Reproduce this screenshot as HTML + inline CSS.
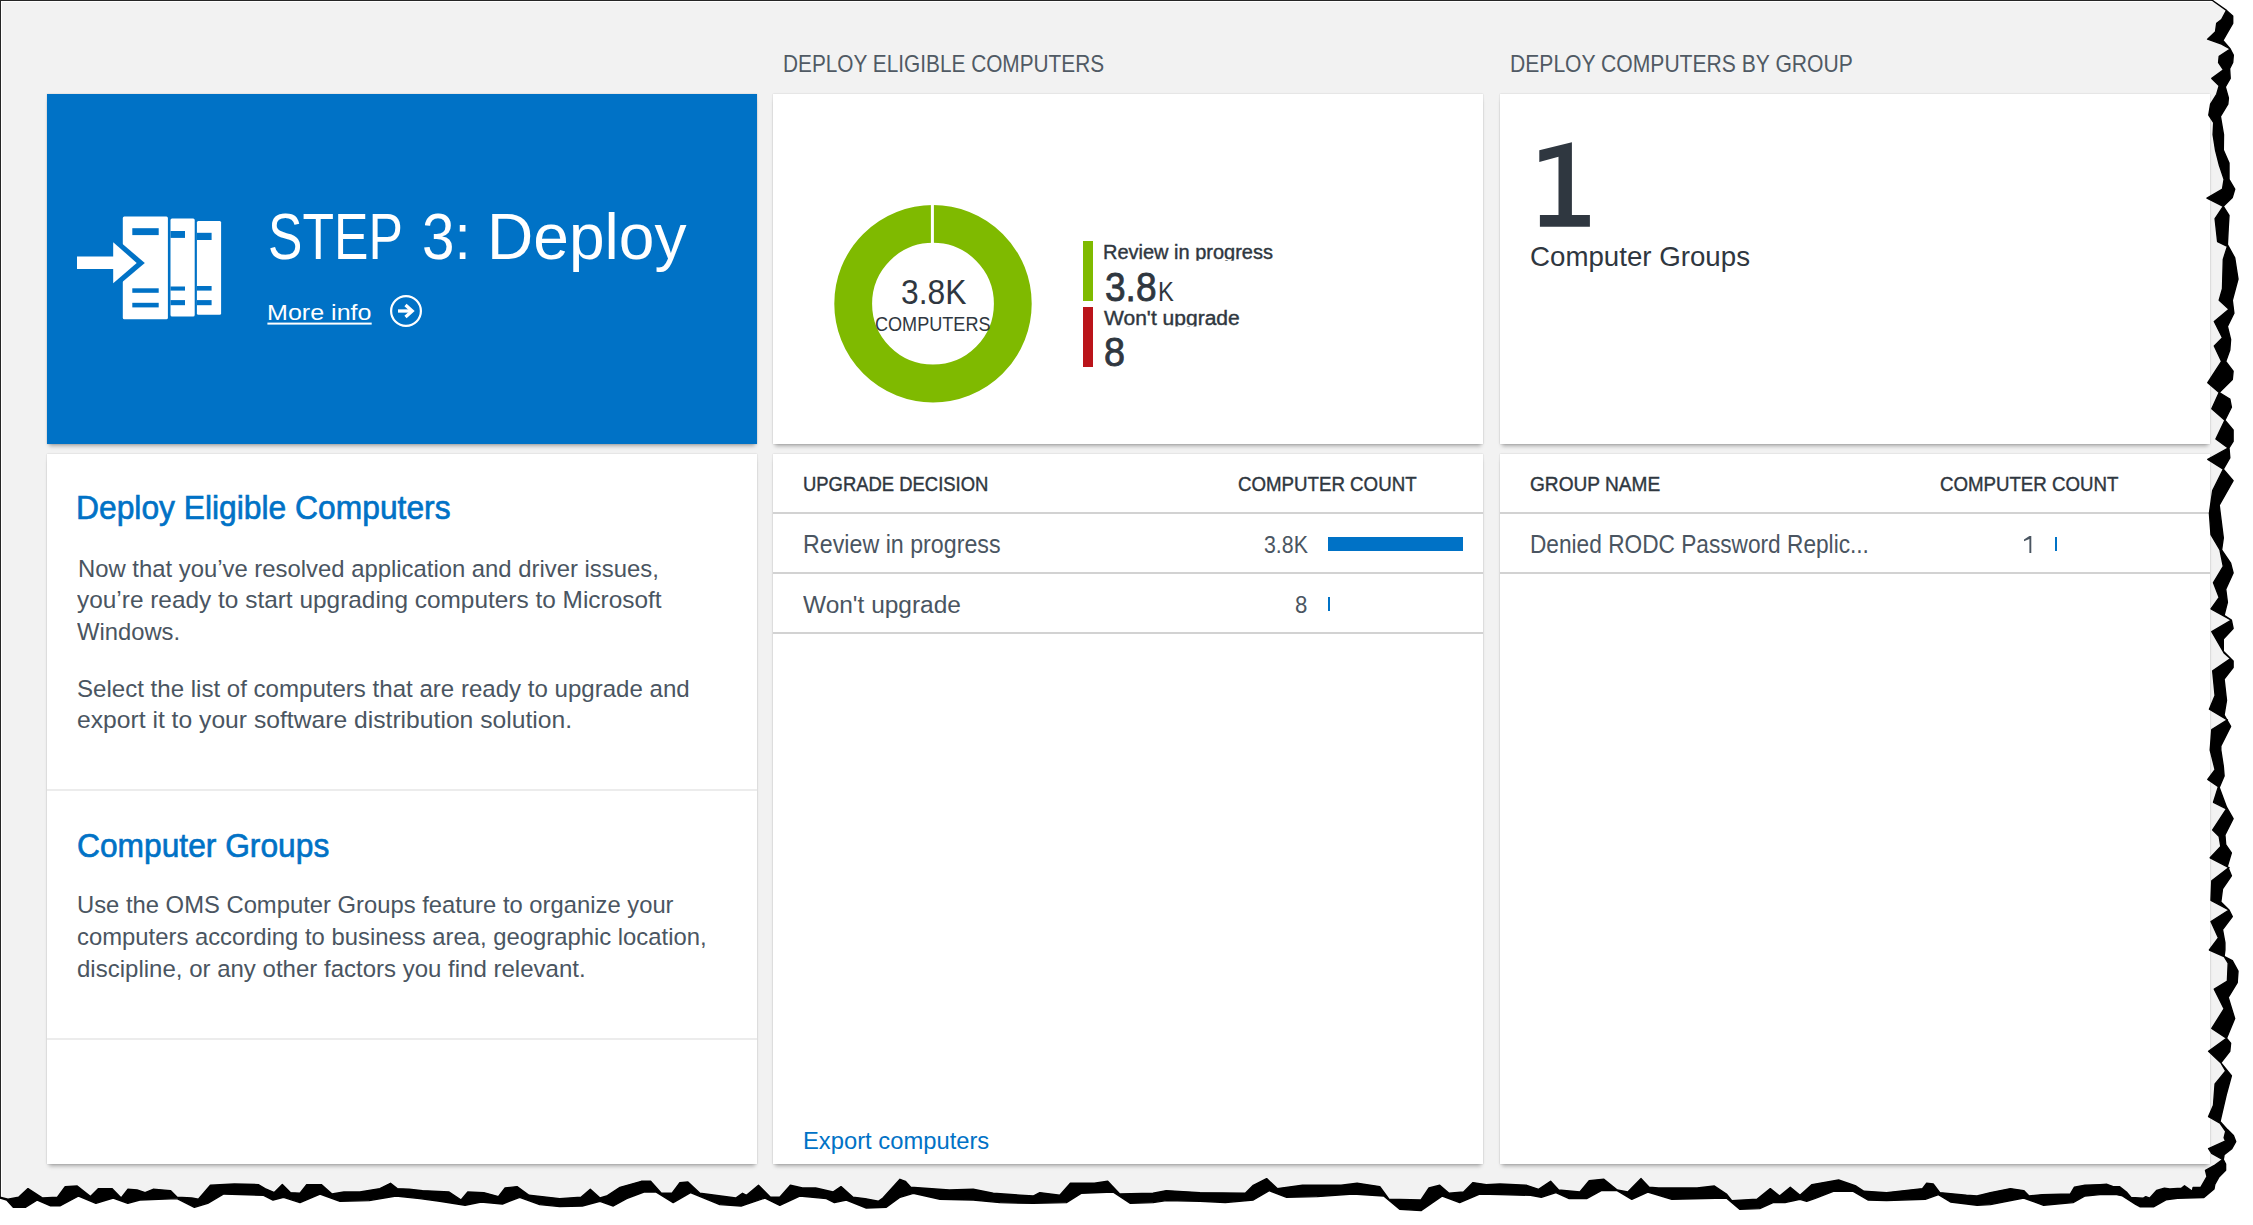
<!DOCTYPE html>
<html><head><meta charset="utf-8">
<style>
html,body{margin:0;padding:0;}
body{width:2253px;height:1225px;overflow:hidden;position:relative;background:#f2f2f2;font-family:"Liberation Sans",sans-serif;}
.t{position:absolute;white-space:nowrap;line-height:1;transform-origin:0 0;}
.card{position:absolute;background:#fff;box-shadow:0 4px 4px -2px rgba(0,0,0,0.3),0 0 1.5px rgba(0,0,0,0.18);}
.div{position:absolute;height:2px;background:#d2d2d2;}
.bar{position:absolute;background:#0072c6;}
#frame{position:absolute;left:0;top:0;width:2253px;height:1225px;box-sizing:border-box;border-top:1px solid #262626;border-left:1px solid #262626;}
#frame2{position:absolute;left:1px;top:1px;width:2252px;height:1224px;box-sizing:border-box;border-top:1px solid #fff;border-left:1px solid #fff;}
</style></head><body>
<div id="frame"></div><div id="frame2"></div>
<!-- cards -->
<div class="card" style="left:47px;top:94px;width:710px;height:350px;background:#0072c6;"></div>
<div class="card" style="left:773px;top:94px;width:710px;height:350px;"></div>
<div class="card" style="left:1500px;top:94px;width:710px;height:350px;"></div>
<div class="card" style="left:47px;top:454px;width:710px;height:710px;"></div>
<div class="card" style="left:773px;top:454px;width:710px;height:710px;"></div>
<div class="card" style="left:1500px;top:454px;width:710px;height:710px;"></div>
<!-- dividers -->
<div class="div" style="left:47px;top:789px;width:710px;height:2px;background:#ececec;"></div>
<div class="div" style="left:47px;top:1038px;width:710px;height:2px;background:#ececec;"></div>
<div class="div" style="left:773px;top:512px;width:710px;"></div>
<div class="div" style="left:773px;top:572px;width:710px;"></div>
<div class="div" style="left:773px;top:632px;width:710px;"></div>
<div class="div" style="left:1500px;top:512px;width:710px;"></div>
<div class="div" style="left:1500px;top:572px;width:710px;"></div>
<!-- bars -->
<div class="bar" style="left:1328px;top:537px;width:135px;height:14px;"></div>
<div class="bar" style="left:1328px;top:597px;width:2px;height:14px;"></div>
<div class="bar" style="left:2054.8px;top:537px;width:2.4px;height:14px;"></div>
<!-- legend bars -->
<div style="position:absolute;left:1083px;top:241px;width:10px;height:60px;background:#7fba00;"></div>
<div style="position:absolute;left:1083px;top:307px;width:10px;height:60px;background:#ba141a;"></div>
<!-- donut -->
<svg style="position:absolute;left:0;top:0" width="2253" height="1225" viewBox="0 0 2253 1225">
  <circle cx="933" cy="303.7" r="79.8" fill="none" stroke="#7fba00" stroke-width="37.8"/>
  <rect x="930.9" y="200" width="3" height="45" fill="#fff"/>
  <!-- server icon -->
  <g fill="#fff">
    <rect x="122.8" y="216.4" width="45.1" height="102.8" rx="1.5"/>
    <rect x="170.5" y="218.6" width="24.2" height="97.9" rx="1.5"/>
    <rect x="196.9" y="221" width="24.2" height="93.7" rx="1.5"/>
  </g>
  <g fill="#0072c6">
    <rect x="132.3" y="228.2" width="26.4" height="6.9"/>
    <rect x="132.3" y="288.3" width="26.4" height="4.5"/>
    <rect x="132.3" y="302.8" width="26.4" height="4.6"/>
    <rect x="170.5" y="231" width="14.5" height="6.9"/>
    <rect x="170.5" y="286.5" width="14.5" height="4.1"/>
    <rect x="170.5" y="300.1" width="14.5" height="5.1"/>
    <rect x="196.9" y="232.8" width="14.7" height="7.2"/>
    <rect x="196.9" y="286" width="14.7" height="4.6"/>
    <rect x="196.9" y="300.1" width="14.7" height="5.1"/>
    <polygon points="113.2,236.1 144.8,262.9 113.2,289.7"/>
  </g>
  <g fill="#fff">
    <rect x="77" y="256.5" width="37" height="12.5"/>
    <polygon points="113.2,242.3 136.7,262.9 113.2,283.2"/>
  </g>
  <!-- more info circle -->
  <circle cx="406" cy="311" r="14.9" fill="none" stroke="#fff" stroke-width="2.2"/>
  <g stroke="#fff" stroke-width="3.3" fill="none" stroke-linecap="butt">
    <line x1="398" y1="311" x2="412" y2="311"/>
    <polyline points="405.5,305 412.2,311 405.5,317" stroke-linejoin="miter"/>
  </g>
  <!-- underline -->
  <rect x="267.4" y="322.6" width="104.3" height="2" fill="#fff"/>
  <!-- small 1 -->
  <polygon fill="#4a5561" points="2029.4,536.1 2031.3,536.1 2031.3,552.9 2029.4,552.9 2029.4,538.9 2024,541.2 2024,539.5"/>
  <!-- big 1 -->
  <polygon fill="#2f3740" points="1571.9,142.2 1571.9,215.1 1589.9,215.1 1589.9,226.8 1539.9,226.8 1539.9,215.1 1558.5,215.1 1558.5,156.8 1539.3,162.1 1539.3,150.3"/>
</svg>
<div class="t" id="h1" style="left:783.44px;top:52.00px;font-size:24.13px;color:#505a64;transform:scaleX(0.8626);">DEPLOY ELIGIBLE COMPUTERS</div>
<div class="t" id="h2" style="left:1509.93px;top:52.00px;font-size:24.13px;color:#505a64;transform:scaleX(0.8746);">DEPLOY COMPUTERS BY GROUP</div>
<div class="t" id="step1" style="left:268.22px;top:204.00px;font-size:65.41px;color:#ffffff;transform:scaleX(0.7894);">STEP</div>
<div class="t" id="step2" style="left:421.91px;top:204.00px;font-size:65.41px;color:#ffffff;transform:scaleX(0.8929);">3:</div>
<div class="t" id="step3" style="left:486.90px;top:204.00px;font-size:65.41px;color:#ffffff;transform:scaleX(0.9799);">Deploy</div>
<div class="t" id="more" style="left:267.09px;top:302.00px;font-size:22.53px;color:#ffffff;transform:scaleX(1.1134);">More info</div>
<div class="t" id="d38" style="left:901.09px;top:274.00px;font-size:35.03px;color:#2f3740;transform:scaleX(0.9084);">3.8K</div>
<div class="t" id="dcomp" style="left:875.20px;top:314.00px;font-size:20.20px;color:#2f3740;transform:scaleX(0.8956);">COMPUTERS</div>
<div class="t" id="lrev" style="left:1103.40px;top:243.00px;font-size:19.91px;color:#2f3740;transform:scaleX(1.0035);-webkit-text-stroke:0.40px #2f3740;clip-path:inset(-5px -5px 2.21px -5px);">Review in progress</div>
<div class="t" id="l38" style="left:1104.57px;top:268.00px;font-size:39.83px;color:#2f3740;transform:scaleX(0.9302);-webkit-text-stroke:0.80px #2f3740;">3.8</div>
<div class="t" id="lK" style="left:1157.92px;top:277.00px;font-size:28.20px;color:#2f3740;transform:scaleX(0.8412);">K</div>
<div class="t" id="lwon" style="left:1103.90px;top:309.00px;font-size:19.91px;color:#2f3740;transform:scaleX(1.0567);-webkit-text-stroke:0.40px #2f3740;clip-path:inset(-5px -5px 2.41px -5px);">Won't upgrade</div>
<div class="t" id="l8" style="left:1103.76px;top:333.00px;font-size:39.97px;color:#2f3740;transform:scaleX(0.9450);-webkit-text-stroke:0.80px #2f3740;">8</div>
<div class="t" id="cg" style="left:1530.13px;top:242.00px;font-size:28.49px;color:#2f3740;transform:scaleX(0.9718);">Computer Groups</div>
<div class="t" id="th1" style="left:803.01px;top:474.00px;font-size:20.64px;color:#2f3740;transform:scaleX(0.8933);-webkit-text-stroke:0.41px #2f3740;">UPGRADE DECISION</div>
<div class="t" id="th2" style="left:1237.99px;top:474.00px;font-size:20.64px;color:#2f3740;transform:scaleX(0.9060);-webkit-text-stroke:0.41px #2f3740;">COMPUTER COUNT</div>
<div class="t" id="r1" style="left:802.95px;top:532.00px;font-size:25.15px;color:#4a5561;transform:scaleX(0.9242);">Review in progress</div>
<div class="t" id="r1v" style="left:1264.20px;top:533.00px;font-size:24.13px;color:#4a5561;transform:scaleX(0.8842);">3.8K</div>
<div class="t" id="r2" style="left:803.40px;top:593.00px;font-size:24.56px;color:#4a5561;transform:scaleX(0.9969);">Won't upgrade</div>
<div class="t" id="r2v" style="left:1295.18px;top:593.00px;font-size:24.27px;color:#4a5561;transform:scaleX(0.9167);">8</div>
<div class="t" id="export" style="left:802.95px;top:1129.00px;font-size:24.42px;color:#0072c6;transform:scaleX(0.9738);">Export computers</div>
<div class="t" id="th3" style="left:1529.97px;top:474.00px;font-size:20.64px;color:#2f3740;transform:scaleX(0.9260);-webkit-text-stroke:0.41px #2f3740;">GROUP NAME</div>
<div class="t" id="th4" style="left:1940.10px;top:474.00px;font-size:20.64px;color:#2f3740;transform:scaleX(0.9049);-webkit-text-stroke:0.41px #2f3740;">COMPUTER COUNT</div>
<div class="t" id="g1" style="left:1529.71px;top:532.00px;font-size:25.29px;color:#4a5561;transform:scaleX(0.8967);">Denied RODC Password Replic...</div>
<div class="t" id="dec" style="left:75.67px;top:491.00px;font-size:32.99px;color:#0072c6;transform:scaleX(0.9638);-webkit-text-stroke:0.66px #0072c6;">Deploy Eligible Computers</div>
<div class="t" id="p1" style="left:77.52px;top:557.00px;font-size:24.27px;color:#4a5561;transform:scaleX(0.9831);">Now that you’ve resolved application and driver issues,</div>
<div class="t" id="p2" style="left:76.90px;top:588.00px;font-size:24.27px;color:#4a5561;transform:scaleX(1.0056);">you’re ready to start upgrading computers to Microsoft</div>
<div class="t" id="p3" style="left:77.30px;top:620.00px;font-size:24.27px;color:#4a5561;transform:scaleX(0.9803);">Windows.</div>
<div class="t" id="p4" style="left:76.61px;top:677.00px;font-size:24.27px;color:#4a5561;transform:scaleX(0.9917);">Select the list of computers that are ready to upgrade and</div>
<div class="t" id="p5" style="left:76.58px;top:708.00px;font-size:24.27px;color:#4a5561;transform:scaleX(1.0168);">export it to your software distribution solution.</div>
<div class="t" id="cgh" style="left:76.67px;top:828.00px;font-size:34.01px;color:#0072c6;transform:scaleX(0.9335);-webkit-text-stroke:0.68px #0072c6;">Computer Groups</div>
<div class="t" id="q1" style="left:77.22px;top:893.00px;font-size:24.27px;color:#4a5561;transform:scaleX(0.9807);">Use the OMS Computer Groups feature to organize your</div>
<div class="t" id="q2" style="left:76.62px;top:925.00px;font-size:24.27px;color:#4a5561;transform:scaleX(0.9826);">computers according to business area, geographic location,</div>
<div class="t" id="q3" style="left:76.61px;top:957.00px;font-size:24.27px;color:#4a5561;transform:scaleX(0.9897);">discipline, or any other factors you find relevant.</div>
<svg style="position:absolute;left:0;top:0" width="2253" height="1225" viewBox="0 0 2253 1225">
<polygon fill="#fff" points="2211.8,0.0 2226.5,10.4 2232.7,15.9 2232.7,23.3 2222.9,40.4 2230.2,49.0 2233.3,55.1 2232.7,62.5 2229.6,68.6 2230.2,78.4 2225.3,87.0 2228.4,98.0 2227.8,104.1 2220.4,116.4 2223.5,134.7 2223.3,150.0 2229.0,163.0 2229.0,179.4 2234.7,189.2 2232.3,197.4 2223.3,206.3 2229.0,215.3 2228.2,228.4 2227.4,244.7 2234.7,257.8 2238.0,279.0 2232.3,300.3 2233.9,313.3 2227.4,326.4 2230.6,339.4 2229.8,350.0 2225.7,361.4 2233.1,371.2 2232.3,379.4 2219.2,392.5 2229.8,399.0 2231.4,407.2 2224.9,420.2 2233.1,430.0 2233.1,441.5 2229.0,448.0 2229.8,457.8 2223.3,469.2 2233.1,480.7 2219.2,505.2 2223.3,537.8 2221.6,550.0 2230.6,563.1 2233.1,572.9 2225.7,589.2 2227.4,602.3 2224.1,615.3 2231.4,620.2 2233.1,628.4 2223.3,639.0 2223.3,651.3 2233.1,661.1 2233.1,667.6 2224.1,679.0 2226.5,700.3 2224.1,715.0 2230.6,726.4 2220.8,746.0 2220.8,750.0 2223.3,766.3 2224.1,776.1 2219.2,787.6 2226.5,807.2 2233.1,818.6 2224.9,834.9 2225.7,844.7 2231.4,852.9 2227.4,866.0 2231.4,875.8 2222.5,888.8 2220.8,901.9 2229.0,910.0 2232.3,916.6 2222.5,929.6 2224.9,942.7 2224.9,950.0 2224.1,956.5 2232.3,960.6 2238.0,971.2 2237.2,982.7 2228.2,997.4 2234.7,1018.6 2226.5,1038.2 2230.6,1043.1 2229.8,1051.3 2220.8,1062.7 2231.4,1075.8 2226.5,1093.7 2220.0,1121.5 2227.4,1129.6 2233.4,1135.4 2235.7,1141.6 2231.8,1148.6 2224.1,1154.8 2223.3,1159.5 2225.6,1164.1 2225.6,1170.3 2218.7,1177.3 2214.8,1184.3 2214.0,1188.9 2203.9,1197.5 2177.5,1198.2 2165.9,1199.8 2156.6,1205.2 2153.5,1206.8 2140.3,1206.8 2135.7,1204.4 2122.5,1195.9 2115.5,1194.4 2100.0,1194.6 2085.0,1196.0 2073.0,1202.6 2043.7,1205.3 2023.7,1198.0 1990.4,1204.6 1977.1,1205.3 1950.5,1202.0 1938.5,1194.6 1925.2,1199.3 1886.6,1200.6 1867.9,1200.0 1853.3,1191.3 1833.3,1191.3 1814.6,1198.6 1806.7,1201.3 1800.0,1199.3 1785.0,1202.6 1773.0,1202.6 1759.7,1208.6 1739.7,1209.3 1726.4,1198.0 1671.8,1199.3 1647.8,1192.0 1631.8,1199.3 1617.2,1190.6 1601.2,1190.6 1586.6,1198.6 1569.2,1198.6 1555.9,1192.6 1541.3,1197.3 1530.6,1195.3 1500.0,1194.6 1479.6,1194.0 1459.7,1202.6 1442.3,1196.0 1421.0,1210.6 1399.7,1209.3 1383.8,1196.0 1353.1,1194.0 1317.2,1196.6 1286.6,1197.3 1269.2,1190.6 1253.3,1200.0 1225.3,1202.6 1200.0,1201.3 1166.3,1200.6 1153.0,1202.6 1130.4,1203.3 1113.0,1192.0 1081.1,1193.3 1066.4,1202.6 1033.2,1203.3 999.9,1202.6 973.2,1200.0 940.0,1199.3 913.3,1193.3 900.0,1197.3 886.3,1207.3 866.3,1208.0 846.3,1200.0 834.4,1202.6 826.4,1198.6 799.7,1196.0 779.8,1205.3 765.1,1198.0 741.1,1206.0 719.8,1204.6 690.5,1192.6 673.2,1202.6 655.9,1192.0 643.9,1192.0 626.6,1198.6 613.3,1206.0 600.0,1201.3 582.3,1206.0 559.7,1206.6 539.7,1204.6 519.7,1197.3 502.4,1204.0 481.1,1202.0 465.1,1205.3 439.8,1201.3 419.8,1198.6 395.9,1196.0 369.2,1200.6 340.0,1201.3 320.0,1194.0 300.0,1202.6 283.6,1197.3 273.0,1200.0 263.6,1195.3 223.7,1194.0 207.7,1203.3 194.4,1207.3 177.1,1198.6 139.8,1200.0 127.8,1203.3 113.2,1198.0 95.9,1203.3 78.6,1196.0 59.9,1205.9 50.6,1205.9 37.3,1200.0 25.3,1207.3 13.3,1207.3 6.7,1200.0 0.0,1198.0 0.0,1225.0 2253.0,1225.0 2253.0,0.0"/>
<polygon fill="#000" stroke="#000" stroke-width="1.4" stroke-linejoin="round" points="2211.8,0.0 2226.5,10.4 2221.6,19.6 2216.7,23.3 2215.5,31.8 2207.6,39.2 2221.6,44.1 2230.2,49.0 2219.2,56.3 2218.6,62.5 2223.5,69.8 2211.8,78.4 2219.2,85.7 2216.7,94.3 2210.6,104.1 2208.8,115.1 2213.7,122.5 2213.1,134.7 2215.5,150.0 2219.2,164.7 2224.1,179.4 2222.5,189.2 2207.0,198.2 2223.3,206.3 2215.1,218.6 2217.6,241.5 2227.4,246.4 2223.3,259.4 2222.5,288.8 2219.2,300.3 2229.0,309.2 2214.3,321.5 2222.5,337.8 2214.3,346.0 2221.6,361.4 2207.8,382.7 2219.2,392.5 2211.8,408.8 2224.9,420.2 2215.9,439.0 2228.2,448.0 2207.8,459.4 2223.3,469.2 2212.7,490.5 2209.4,513.3 2211.0,534.6 2220.0,550.0 2223.3,566.3 2213.5,582.7 2219.2,597.4 2211.0,608.8 2231.4,620.2 2211.8,631.7 2224.1,652.9 2230.6,658.6 2212.7,670.9 2215.1,695.4 2209.4,709.2 2227.4,719.9 2211.8,729.6 2210.2,750.0 2215.1,769.6 2207.8,779.4 2218.4,786.7 2213.5,802.3 2226.5,808.8 2212.7,830.0 2219.2,836.6 2220.8,846.4 2210.2,857.8 2229.0,867.6 2211.8,880.7 2211.0,900.3 2229.0,910.0 2211.0,921.5 2218.4,937.8 2209.4,950.0 2224.1,956.5 2228.2,963.1 2227.4,981.0 2214.3,989.2 2224.1,1008.8 2211.8,1028.4 2226.5,1038.2 2208.6,1051.3 2220.8,1062.7 2225.7,1070.9 2215.1,1083.9 2213.5,1105.2 2208.6,1116.6 2220.0,1123.1 2225.7,1131.3 2224.1,1137.8 2225.6,1140.9 2208.6,1148.6 2211.7,1153.3 2222.5,1159.5 2214.0,1165.7 2205.5,1170.3 2207.0,1176.5 2200.8,1187.4 2193.1,1187.4 2192.3,1191.3 2184.5,1185.8 2181.4,1188.2 2169.8,1188.9 2164.4,1188.2 2156.6,1190.5 2149.6,1198.2 2145.8,1196.7 2143.4,1198.2 2131.0,1197.5 2126.4,1192.0 2119.4,1186.6 2113.2,1186.6 2107.0,1184.3 2100.0,1184.6 2085.0,1185.3 2074.3,1187.3 2070.3,1194.0 2042.3,1194.6 2029.0,1196.0 2023.7,1190.6 2010.4,1188.6 1990.4,1192.6 1977.1,1196.0 1966.4,1195.3 1939.8,1192.6 1933.2,1184.0 1926.5,1183.3 1922.5,1188.6 1886.6,1192.6 1863.9,1191.3 1855.9,1186.0 1838.6,1180.0 1812.0,1184.6 1800.0,1195.3 1790.3,1187.3 1779.6,1196.0 1770.3,1188.6 1757.0,1199.3 1731.7,1200.6 1726.4,1194.0 1714.4,1186.0 1697.1,1188.0 1658.5,1188.0 1649.1,1187.3 1641.1,1178.6 1627.8,1192.0 1617.2,1190.0 1603.9,1179.3 1589.2,1180.6 1579.9,1192.0 1558.6,1190.0 1550.6,1181.3 1538.6,1189.3 1526.6,1185.3 1500.0,1184.0 1486.3,1184.6 1473.0,1182.6 1463.6,1192.0 1449.0,1193.3 1439.7,1185.3 1429.0,1188.0 1421.0,1200.0 1389.1,1199.3 1379.8,1186.6 1357.1,1183.3 1341.1,1185.3 1302.5,1185.3 1277.2,1188.6 1266.6,1178.6 1253.3,1185.3 1245.3,1193.3 1200.0,1192.6 1166.3,1190.6 1153.0,1193.3 1119.7,1194.0 1107.7,1181.3 1094.4,1183.3 1070.4,1183.3 1059.8,1195.3 1039.8,1192.6 1033.2,1196.0 993.2,1193.3 973.2,1189.3 949.3,1190.0 910.7,1187.3 905.3,1181.3 900.0,1179.3 882.3,1198.6 878.3,1201.3 865.0,1198.6 853.0,1197.3 841.0,1186.6 833.0,1192.0 815.7,1188.0 802.4,1188.0 790.4,1185.3 779.8,1197.3 770.4,1197.3 758.5,1185.3 746.5,1195.3 742.5,1193.3 735.8,1198.0 699.9,1193.3 687.9,1182.0 679.9,1182.6 671.9,1193.3 661.3,1193.3 650.6,1181.3 641.3,1181.3 620.0,1187.3 606.7,1196.0 600.0,1198.0 590.3,1189.3 581.0,1197.3 559.7,1198.6 529.0,1195.3 517.0,1186.6 505.1,1188.0 498.4,1196.6 483.8,1192.6 467.8,1192.0 461.1,1200.0 449.1,1192.0 422.5,1190.6 409.2,1189.3 397.2,1188.6 390.5,1183.3 379.9,1188.6 359.9,1192.0 343.9,1192.0 332.0,1194.0 321.3,1184.6 306.7,1184.6 300.0,1193.3 290.3,1192.6 282.3,1184.6 274.3,1192.6 265.0,1188.6 258.3,1184.6 234.4,1184.0 210.4,1185.3 198.4,1199.3 191.7,1198.0 177.1,1197.3 170.4,1190.6 153.1,1189.3 145.1,1192.6 137.1,1190.0 127.8,1189.3 121.2,1198.0 111.9,1188.6 98.5,1188.6 90.5,1196.6 77.2,1186.0 65.2,1186.6 57.3,1197.3 42.6,1198.0 28.0,1188.6 18.6,1197.3 8.0,1199.3 0.0,1197.3 0.0,1198.0 6.7,1200.0 13.3,1207.3 25.3,1207.3 37.3,1200.0 50.6,1205.9 59.9,1205.9 78.6,1196.0 95.9,1203.3 113.2,1198.0 127.8,1203.3 139.8,1200.0 177.1,1198.6 194.4,1207.3 207.7,1203.3 223.7,1194.0 263.6,1195.3 273.0,1200.0 283.6,1197.3 300.0,1202.6 320.0,1194.0 340.0,1201.3 369.2,1200.6 395.9,1196.0 419.8,1198.6 439.8,1201.3 465.1,1205.3 481.1,1202.0 502.4,1204.0 519.7,1197.3 539.7,1204.6 559.7,1206.6 582.3,1206.0 600.0,1201.3 613.3,1206.0 626.6,1198.6 643.9,1192.0 655.9,1192.0 673.2,1202.6 690.5,1192.6 719.8,1204.6 741.1,1206.0 765.1,1198.0 779.8,1205.3 799.7,1196.0 826.4,1198.6 834.4,1202.6 846.3,1200.0 866.3,1208.0 886.3,1207.3 900.0,1197.3 913.3,1193.3 940.0,1199.3 973.2,1200.0 999.9,1202.6 1033.2,1203.3 1066.4,1202.6 1081.1,1193.3 1113.0,1192.0 1130.4,1203.3 1153.0,1202.6 1166.3,1200.6 1200.0,1201.3 1225.3,1202.6 1253.3,1200.0 1269.2,1190.6 1286.6,1197.3 1317.2,1196.6 1353.1,1194.0 1383.8,1196.0 1399.7,1209.3 1421.0,1210.6 1442.3,1196.0 1459.7,1202.6 1479.6,1194.0 1500.0,1194.6 1530.6,1195.3 1541.3,1197.3 1555.9,1192.6 1569.2,1198.6 1586.6,1198.6 1601.2,1190.6 1617.2,1190.6 1631.8,1199.3 1647.8,1192.0 1671.8,1199.3 1726.4,1198.0 1739.7,1209.3 1759.7,1208.6 1773.0,1202.6 1785.0,1202.6 1800.0,1199.3 1806.7,1201.3 1814.6,1198.6 1833.3,1191.3 1853.3,1191.3 1867.9,1200.0 1886.6,1200.6 1925.2,1199.3 1938.5,1194.6 1950.5,1202.0 1977.1,1205.3 1990.4,1204.6 2023.7,1198.0 2043.7,1205.3 2073.0,1202.6 2085.0,1196.0 2100.0,1194.6 2115.5,1194.4 2122.5,1195.9 2135.7,1204.4 2140.3,1206.8 2153.5,1206.8 2156.6,1205.2 2165.9,1199.8 2177.5,1198.2 2203.9,1197.5 2214.0,1188.9 2214.8,1184.3 2218.7,1177.3 2225.6,1170.3 2225.6,1164.1 2223.3,1159.5 2224.1,1154.8 2231.8,1148.6 2235.7,1141.6 2233.4,1135.4 2227.4,1129.6 2220.0,1121.5 2226.5,1093.7 2231.4,1075.8 2220.8,1062.7 2229.8,1051.3 2230.6,1043.1 2226.5,1038.2 2234.7,1018.6 2228.2,997.4 2237.2,982.7 2238.0,971.2 2232.3,960.6 2224.1,956.5 2224.9,950.0 2224.9,942.7 2222.5,929.6 2232.3,916.6 2229.0,910.0 2220.8,901.9 2222.5,888.8 2231.4,875.8 2227.4,866.0 2231.4,852.9 2225.7,844.7 2224.9,834.9 2233.1,818.6 2226.5,807.2 2219.2,787.6 2224.1,776.1 2223.3,766.3 2220.8,750.0 2220.8,746.0 2230.6,726.4 2224.1,715.0 2226.5,700.3 2224.1,679.0 2233.1,667.6 2233.1,661.1 2223.3,651.3 2223.3,639.0 2233.1,628.4 2231.4,620.2 2224.1,615.3 2227.4,602.3 2225.7,589.2 2233.1,572.9 2230.6,563.1 2221.6,550.0 2223.3,537.8 2219.2,505.2 2233.1,480.7 2223.3,469.2 2229.8,457.8 2229.0,448.0 2233.1,441.5 2233.1,430.0 2224.9,420.2 2231.4,407.2 2229.8,399.0 2219.2,392.5 2232.3,379.4 2233.1,371.2 2225.7,361.4 2229.8,350.0 2230.6,339.4 2227.4,326.4 2233.9,313.3 2232.3,300.3 2238.0,279.0 2234.7,257.8 2227.4,244.7 2228.2,228.4 2229.0,215.3 2223.3,206.3 2232.3,197.4 2234.7,189.2 2229.0,179.4 2229.0,163.0 2223.3,150.0 2223.5,134.7 2220.4,116.4 2227.8,104.1 2228.4,98.0 2225.3,87.0 2230.2,78.4 2229.6,68.6 2232.7,62.5 2233.3,55.1 2230.2,49.0 2222.9,40.4 2232.7,23.3 2232.7,15.9 2226.5,10.4 2211.8,0.0"/>
</svg>
</body></html>
